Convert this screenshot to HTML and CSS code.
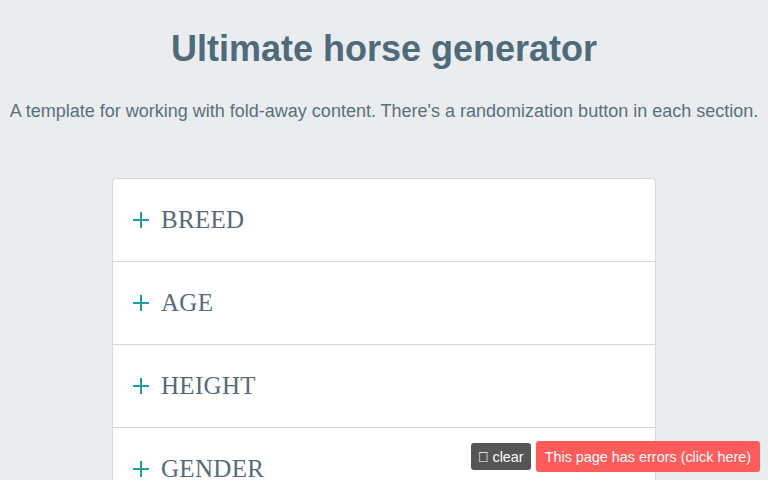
FILE: index.html
```html
<!DOCTYPE html>
<html>
<head>
    <link rel="stylesheet" href="styles.css">
</head>
<body>
    <h1>Ultimate horse generator</h1>
    <p class="intro">A template for working with fold-away content. There's a randomization button in each section.</p>

    <div class="sections">
        <div class="section"><span class="plus"></span><span class="title">BREED</span></div>
        <div class="section"><span class="plus"></span><span class="title">AGE</span></div>
        <div class="section"><span class="plus"></span><span class="title">HEIGHT</span></div>
        <div class="section"><span class="plus"></span><span class="title">GENDER</span></div>
    </div>

    <div class="console-bar">
        <button class="clear-btn">&#xf1f8; clear</button>
        <button class="error-btn">This page has errors (click here)</button>
    </div>
</body>
</html>
```
FILE: styles.css
```css
body {
    margin: 0;
    background: #e9edf0;
    font-family: "Liberation Sans", Arial, sans-serif;
    color: #4f6977;
    overflow: hidden;
}
h1 {
    margin: 28px 0 0;
    text-align: center;
    font-size: 36px;
    line-height: 42px;
    font-weight: bold;
    color: #4f6a78;
}
.intro {
    margin: 30px 0 0;
    text-align: center;
    font-size: 18px;
    line-height: 22px;
    color: #5b707b;
}
.sections {
    width: 542px;
    margin: 56px auto 0;
    background: #fff;
    border: 1px solid #d4d9dd;
    border-radius: 4px;
}
.section {
    height: 82px;
    display: flex;
    align-items: center;
    padding-left: 20px;
    border-top: 1px solid #d4d9dd;
}
.section:first-child {
    border-top: none;
}
.plus {
    position: relative;
    width: 16px;
    height: 16px;
    margin-right: 12px;
}
.plus::before,
.plus::after {
    content: "";
    position: absolute;
    background: #1b9ea6;
}
.plus::before {
    left: 0;
    top: 7px;
    width: 16px;
    height: 2px;
}
.plus::after {
    left: 7px;
    top: 0;
    width: 2px;
    height: 16px;
}
.title {
    font-family: "Liberation Serif", "Times New Roman", serif;
    font-size: 25px;
    color: #566b76;
    letter-spacing: 0.3px;
}
.console-bar {
    position: fixed;
    right: 8px;
    bottom: 8px;
    display: flex;
    align-items: center;
    gap: 5px;
}
.console-bar button {
    border: none;
    border-radius: 3px;
    color: #fff;
    font-family: "Liberation Sans", Arial, sans-serif;
    font-size: 14.4px;
    cursor: pointer;
}
.clear-btn {
    background: #555;
    height: 27px;
    padding: 0 7px;
}
.error-btn {
    background: #ff5b5b;
    height: 31px;
    padding: 0 9px;
}
```
